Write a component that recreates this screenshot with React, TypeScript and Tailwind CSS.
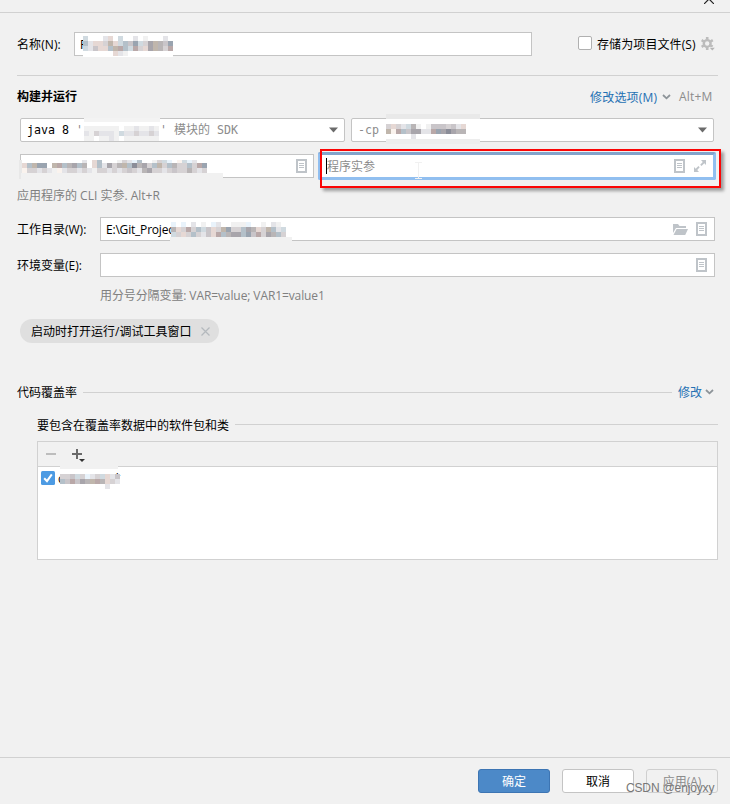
import type { ReactNode } from 'react';

const shades: Record<string, string> = {
  a: '#ffffff', b: '#f1f1f1', c: '#e4e4e8', d: '#d6d2d4', e: '#c9c5c9', f: '#b9b5b6',
  g: '#a8a5ab', h: '#b4c0c9', i: '#e6d8d4', j: '#c0b6ac', k: '#d0dae0', l: '#8b8d98',
  m: '#9aa4b0', n: '#e9f3fb', o: '#faf3ee', p: '#b9a8a8',
};

/* Pixelated strip: each letter is one 5px cell, a dot leaves the cell empty. */
function Mosaic({ rows, className }: { rows: string[]; className: string }) {
  const w = rows[0].length * 5;
  const h = rows.length * 5;
  return (
    <svg className={`absolute ${className}`} width={w} height={h} shapeRendering="crispEdges">
      {rows.map((row, y) =>
        row.split('').map((c, x) =>
          c === '.' ? null : <rect key={`${x}-${y}`} x={x * 5} y={y * 5} width="5" height="5" fill={shades[c]} />
        )
      )}
    </svg>
  );
}

function DocIcon() {
  return (
    <svg width="11" height="14" viewBox="0 0 11 14" shapeRendering="crispEdges" className="block shrink-0">
      <path d="M1 1h9v12h-9z" fill="none" stroke="#bfc4c9" strokeWidth="2" />
      <path d="M3 4.5h5M3 6.5h5M3 8.5h5" stroke="#bfc4c9" />
    </svg>
  );
}

function FolderIcon() {
  return (
    <svg width="15" height="11" viewBox="0 0 15 11" className="block shrink-0" fill="#bfc4c9">
      <path d="M0 0h5l1.5 2H13v2H3L0 9z" />
      <path d="M3.6 5H15l-2.8 6H.5z" />
    </svg>
  );
}

function ExpandIcon() {
  return (
    <svg width="12" height="12" viewBox="0 0 12 12" className="block shrink-0" fill="#bfc4c9">
      <path d="M7 0h5v5l-1.7-1.7L7.5 6 6.2 4.7 8.8 2zM0 7l1.7 1.7L4.4 6l1.3 1.3L3.2 10 5 12H0z" />
    </svg>
  );
}

function GearIcon() {
  return (
    <svg width="14" height="14" viewBox="0 0 14 14" className="block shrink-0">
      <circle cx="6.2" cy="6.5" r="3.4" fill="none" stroke="#bcbcbc" strokeWidth="2.4" />
      <path d="M6.2 0v2.5M6.2 10.5V13M.6 3.2l2.2 1.3M9.6 8.5l2 1.2M.6 9.8l2.2-1.3M9.6 4.5l2.2-1.3" stroke="#bcbcbc" strokeWidth="2.6" />
      <path d="M7.5 10h6.5v4h-4z" fill="#f1f1f1" />
      <path d="M8.8 10.8h5L11.3 13.6z" fill="#b4b4b4" />
    </svg>
  );
}

function Chevron() {
  return (
    <svg width="9" height="6" viewBox="0 0 9 6" className="block shrink-0">
      <path d="M1 1l3.5 3.3L8 1" fill="none" stroke="#8d9499" strokeWidth="1.8" />
    </svg>
  );
}

function Arrow() {
  return (
    <svg width="9" height="6" viewBox="0 0 9 6" className="block shrink-0">
      <path d="M0 .5h9L4.5 5.5z" fill="#6b6b6b" />
    </svg>
  );
}

function Field({ className = '', children }: { className?: string; children?: ReactNode }) {
  return (
    <div className={`relative flex h-6 items-center border border-[#c4c4c4] bg-white ${className}`}>{children}</div>
  );
}

const mono = "font-['DejaVu_Sans_Mono','Noto_Sans_CJK_SC',monospace] text-[11.63px]";

export default function App() {
  return (
    <div className="flex h-[804px] w-[730px] flex-col overflow-hidden bg-[#f1f1f1] font-['Open_Sans','Noto_Sans_CJK_SC',sans-serif] text-[12px] leading-[18px] whitespace-nowrap text-black">
      <header className="flex h-[13px] shrink-0 justify-end border-b border-[#d1d1d1] pr-4">
        <svg width="10" height="10" viewBox="0 0 10 10" className="-mt-[6px] block">
          <path d="M0 0l10 10M10 0L0 10" stroke="#222" strokeWidth="1.2" />
        </svg>
      </header>

      <main className="flex flex-1 flex-col">
        <div className="mt-[19px] flex h-6 items-center pl-[17px]">
          <span className="w-[57px] pt-[2px] tracking-[0.1px]">名称(N):</span>
          <Field className="w-[458px] pl-[5px]">
            <span className="pt-px">R</span>
            <div className="absolute top-[19px] left-2 h-[5px] w-[90px] bg-white" />
            <Mosaic
              className="top-[3px] left-2"
              rows={['k...ci.k..c.b...c.', 'hciidjikhemkdgjfem', 'kceiihjphkpdigjfdp', 'aaaaaaicbaaaaaaaaa']}
            />
          </Field>
          <div className="-mt-[2px] ml-[46px] size-[14px] rounded-[2px] border border-[#b0b0b0] bg-white" />
          <span className="ml-[5px] w-[104px] pt-px tracking-[0.1px]">存储为项目文件(S)</span>
          <GearIcon />
        </div>

        <div className="mt-[19px] mr-3 ml-[17px] border-t border-[#d1d1d1]" />

        <div className="mt-3 flex h-[18px] items-center pr-4 pl-[17px]">
          <b className="flex-1">构建并运行</b>
          <span className="w-[72px] pt-px tracking-[0.2px] text-[#2470b3]">修改选项(M)</span>
          <Chevron />
          <span className="ml-2 w-[35px] tracking-[0.2px] text-[#8c8c8c]">Alt+M</span>
        </div>

        <div className="mt-3 flex gap-[6px] pl-5">
          <Field className={`w-[325px] rounded-[2px] pr-[6px] pl-[6px] ${mono}`}>
            <span className="flex-1 whitespace-pre text-[#8c8c8c]">
              <span className="text-black">java 8</span> '<span className="inline-block w-[77px]" />'{' '}
              <span className="text-[12px]">模块的</span> SDK
            </span>
            <Arrow />
            <div className="absolute -top-px left-[63px] h-1 w-[76px] bg-[#f3f3f3]" />
            <Mosaic className="top-[7px] left-[63px]" rows={['bbbbbbb.bbcbbcb', 'cbdcccbkccdccdc', 'bbabbcbabbbbbbb']} />
          </Field>
          <Field className={`w-[363px] rounded-[2px] pr-[6px] pl-[6px] ${mono}`}>
            <span className="flex-1 text-[#8c8c8c]">-cp</span>
            <Arrow />
            <div className="absolute -top-[5px] left-[34px] h-[5px] w-[94px] bg-[#e9e9e9]" />
            <div className="absolute top-5 left-[34px] h-[5px] w-[94px] bg-[#ededed]" />
            <Mosaic className="top-[5px] left-[34px]" rows={['didckfb.beeedeci', 'jopheggccpmglgff', '.....c..........']} />
          </Field>
        </div>

        <div className="mt-3 flex pl-5">
          <Field className="w-[294px] justify-end pr-[6px]">
            <div className="absolute top-[5px] -left-[2px] h-[19px] w-[3px] bg-[#e8e8e8]" />
            <div className="absolute top-[18px] left-0 h-[6px] w-[202px] bg-[#f1f1f1]" />
            <div className="absolute top-[5px] left-px h-[13px] w-[185px] overflow-hidden">
              <Mosaic
                className="-top-[2px] left-0"
                rows={[
                  '............c.ih...bdcnh..bdkn.oknc..',
                  'ihjmm.jphfghf.ihcgdfjhlfgdhjdhfddhdpm',
                  'oddcdcbocddcdcbddcdcdedcfgddcdeddfdcd',
                ]}
              />
            </div>
            <DocIcon />
          </Field>
          <div className="relative ml-1 h-6 w-[398px]">
            <div className="-mt-[2px] flex h-7 items-center rounded-[2px] border-[3px] border-[#91bff0] border-t-[#83a4cb] bg-white pr-[7px] pl-[5px] text-[#8c8c8c]">
              <span className="h-4 flex-1 border-l border-black leading-[18px]">程序实参</span>
              <DocIcon />
              <span className="ml-[9px]">
                <ExpandIcon />
              </span>
            </div>
            <svg className="absolute top-2 left-[97px]" width="7" height="17" viewBox="0 0 7 17">
              <path d="M0 .5h7M3.5 0v17M0 16.5h7" stroke="#f1f1f1" />
            </svg>
            <div className="absolute -top-[5px] left-[2px] h-[39px] w-[401px] border-2 border-[#fb0505] shadow-[3px_3px_3px_rgba(0,0,0,0.35)]" />
          </div>
        </div>

        <div className="mt-2 h-[18px] pl-[17px] pt-px text-[#808080]">应用程序的 CLI 实参. Alt+R</div>

        <div className="mt-[13px] flex h-6 items-center pl-[17px]">
          <span className="w-[83px] pt-[2px]">工作目录(W):</span>
          <Field className="w-[615px] pr-[7px] pl-[5px]">
            <span className="flex-1 pt-px tracking-[-0.2px]">E:\Git_Projec</span>
            <FolderIcon />
            <span className="ml-2">
              <DocIcon />
            </span>
            <div className="absolute top-[19px] left-[69px] h-[5px] w-[122px] bg-[#f1f1f1]" />
            <Mosaic
              className="top-[4px] left-[70px]"
              rows={['n.n.c.b.nc..bbbn..b.cb..', 'fidpdhkeidjmddhgfidjhck.', 'kdidhdceiphfgghmepdgfhd.']}
            />
          </Field>
        </div>

        <div className="mt-3 flex h-6 items-center pl-[17px]">
          <span className="w-[83px] pt-[2px]">环境变量(E):</span>
          <Field className="w-[615px] justify-end pr-[7px]">
            <DocIcon />
          </Field>
        </div>

        <div className="mt-[9px] h-[18px] pl-[100px] pt-px tracking-[-0.1px] text-[#808080]">
          用分号分隔变量: VAR=value; VAR1=value1
        </div>

        <div className="mt-[15px] ml-5 flex h-6 w-[199px] items-center rounded-full bg-[#dfdfdf] pl-[11px]">
          <span className="w-[170px] pt-[2px]">启动时打开运行/调试工具窗口</span>
          <svg width="9" height="9" viewBox="0 0 9 9">
            <path d="M.5 .5l8 8M8.5 .5l-8 8" stroke="#b4b9bd" strokeWidth="1.2" />
          </svg>
        </div>

        <div className="mt-10 flex h-[18px] items-center pr-4 pl-[17px]">
          <span className="w-[66px] pt-[2px]">代码覆盖率</span>
          <div className="h-px w-[589px] bg-[#d1d1d1]" />
          <span className="ml-[6px] flex-1 pt-px text-[#2470b3]">修改</span>
          <Chevron />
        </div>

        <div className="mt-[14px] flex h-[18px] items-center pr-3 pl-[37px]">
          <span className="w-[198px] pt-[3px]">要包含在覆盖率数据中的软件包和类</span>
          <div className="h-px flex-1 bg-[#d1d1d1]" />
        </div>

        <div className="mt-2 ml-[37px] h-[119px] w-[681px] border border-[#d1d1d1] bg-white">
          <div className="flex h-[25px] items-center border-b border-[#d1d1d1] bg-[#f1f1f1] pl-2">
            <div className="h-[2px] w-[10px] bg-[#bdbdbd]" />
            <svg className="mt-[3px] ml-4" width="13" height="13" viewBox="0 0 13 13" shapeRendering="crispEdges">
              <path d="M0 5h10M5 0v10" stroke="#6a6a6a" strokeWidth="2" />
              <path d="M7 10h6l-3 3z" fill="#333" shapeRendering="auto" />
            </svg>
          </div>
          <div className="relative flex h-[22px] items-center pl-[3px]">
            <svg width="14" height="14" viewBox="0 0 14 14" className="block">
              <rect width="14" height="14" rx="1.5" fill="#4d9be3" />
              <path d="M3.2 7.2l2.8 3L10.8 3.4" fill="none" stroke="#fff" strokeWidth="2" />
            </svg>
            <span className="ml-[3px] w-[56px] pt-px">c</span>
            <span className="pt-px">*</span>
            <div className="absolute -top-px left-[22px] h-[3px] w-[58px] bg-[#f1f1f1]" />
            <Mosaic className="top-[7px] left-[22px]" rows={['ddekdncdkice', 'hepegfjpfidc', '.........c..']} />
          </div>
        </div>
      </main>

      <footer className="relative flex h-[47px] shrink-0 gap-3 border-t border-[#d1d1d1] pt-[11px] pl-[478px] leading-[24px]">
        <button className="h-6 w-[72px] rounded-[3px] border border-[#3d75b3] bg-[#4c89c8] text-white">确定</button>
        <button className="h-6 w-[72px] rounded-[3px] border border-[#c4c4c4] bg-white">取消</button>
        <button className="h-6 w-[72px] rounded-[3px] border border-[#cfcfcf] text-[#8c8c8c]">应用(A)</button>
        <span className="absolute top-[21px] left-[626px] font-['Liberation_Sans',sans-serif] text-[12px] leading-[18px] tracking-[-0.15px] text-[#777777]">
          CSDN @enjoyxy
        </span>
      </footer>
    </div>
  );
}
